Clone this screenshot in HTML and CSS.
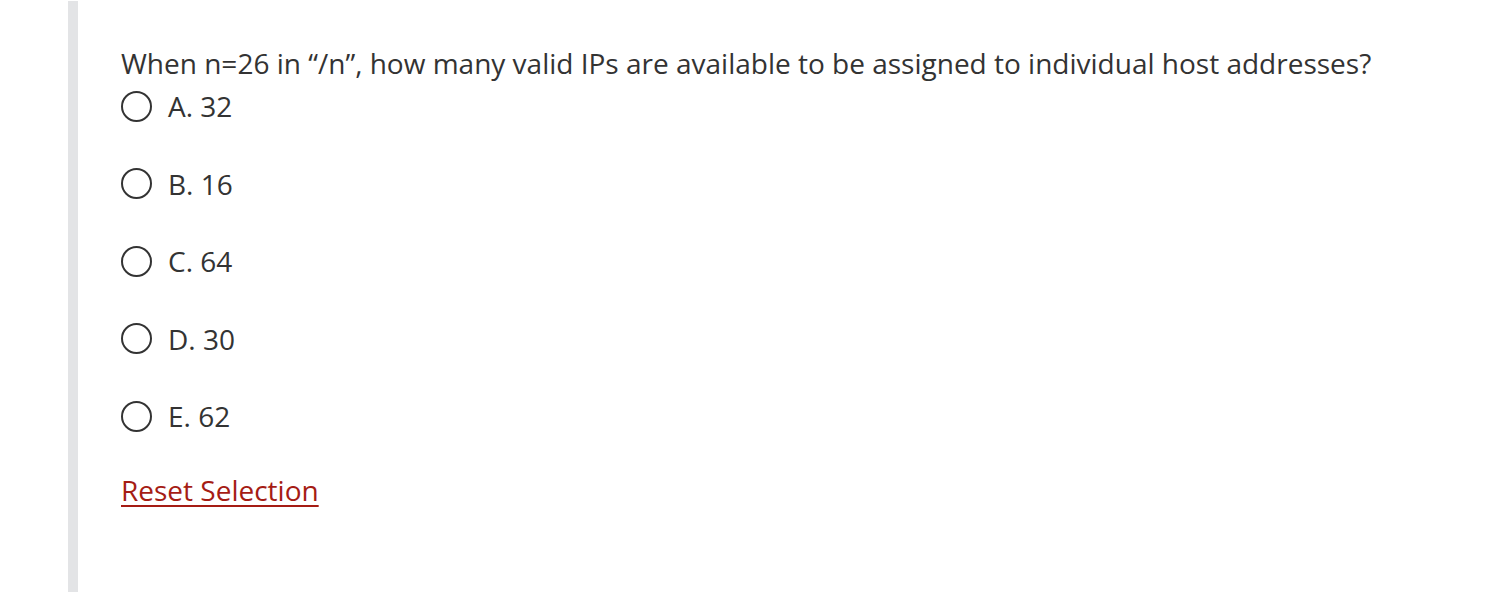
FILE: index.html
```html
<!DOCTYPE html>
<html lang="en">
<head>
<meta charset="utf-8">
<title>Question</title>
<link rel="stylesheet" href="styles.css">
</head>
<body>
<div class="page">
  <div class="question">
    <p class="prompt">When n=26 in “/n”, how many valid IPs are available to be assigned to individual host addresses?</p>
    <ul class="options">
      <li class="option"><span class="radio"></span><span class="label">A. 32</span></li>
      <li class="option"><span class="radio"></span><span class="label">B. 16</span></li>
      <li class="option"><span class="radio"></span><span class="label">C. 64</span></li>
      <li class="option"><span class="radio"></span><span class="label">D. 30</span></li>
      <li class="option"><span class="radio"></span><span class="label">E. 62</span></li>
    </ul>
    <a class="reset" href="#">Reset Selection</a>
  </div>
</div>
</body>
</html>
```
FILE: styles.css
```css
html, body {
  margin: 0;
  padding: 0;
  background: #ffffff;
}
body {
  font-family: "Open Sans", "Liberation Sans", sans-serif;
  color: #333333;
}
.page {
  padding-top: 1px;
  padding-left: 68px;
}
.question {
  height: 591px;
  box-sizing: border-box;
  border-left: 10px solid #e3e4e6;
  padding: 43px 0 0 43px;
}
.prompt {
  margin: 0;
  font-size: 28px;
  line-height: 38px;
}
.options {
  list-style: none;
  margin: 8px 0 0 0;
  padding: 0;
  display: flex;
  flex-direction: column;
  gap: 45.5px;
}
.option {
  display: flex;
  align-items: center;
  height: 32px;
  font-size: 28px;
  line-height: 38px;
}
.radio {
  width: 27px;
  height: 27px;
  border: 2px solid #333333;
  border-radius: 50%;
  box-sizing: content-box;
  flex: none;
}
.label {
  margin-left: 16px;
}
.reset {
  display: inline-block;
  margin-top: 39px;
  font-size: 28px;
  line-height: 38px;
  color: #a51c14;
  text-decoration: underline;
  text-underline-offset: 4px;
}
```
